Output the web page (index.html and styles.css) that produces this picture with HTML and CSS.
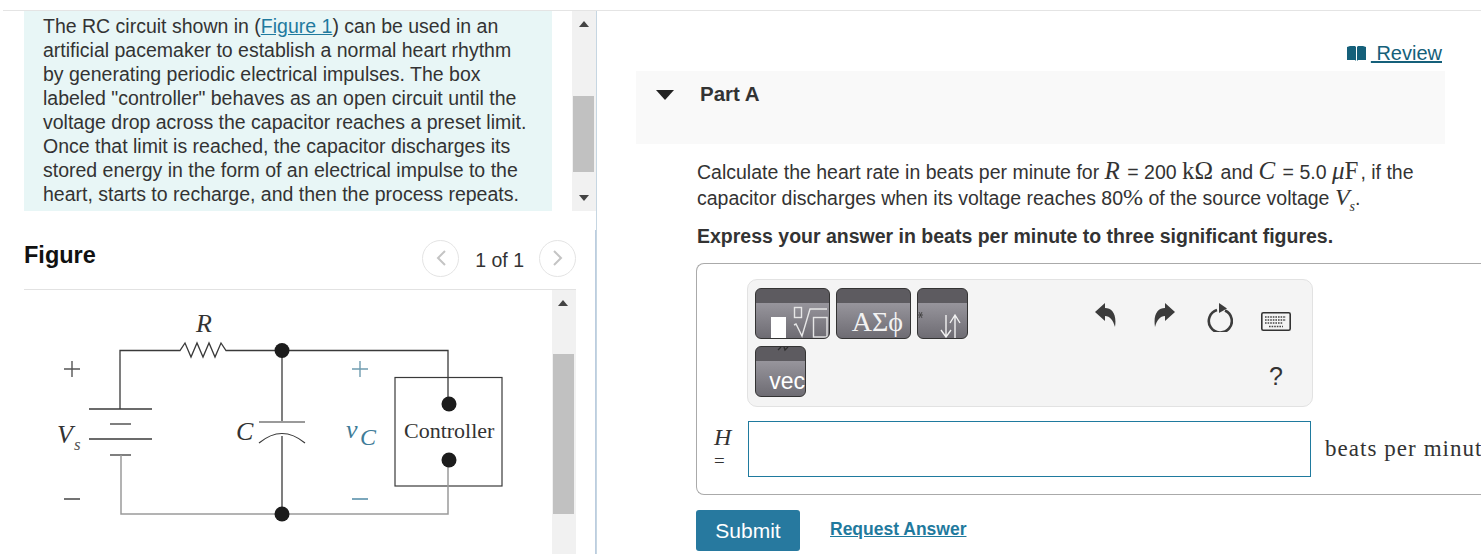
FILE: index.html
```html
<!DOCTYPE html>
<html lang="en">
<head>
  <meta charset="UTF-8">
  <title>Part A</title>
  <link rel="stylesheet" href="styles.css">
</head>
<body>
  <div class="page">
    <!-- Left column -->
    <div class="left">
      <div class="passage-row">
        <div class="passage">
          The RC circuit shown in (<a href="#">Figure 1</a>) can be used in an artificial pacemaker to establish a normal heart rhythm by generating periodic electrical impulses. The box labeled "controller" behaves as an open circuit until the voltage drop across the capacitor reaches a preset limit. Once that limit is reached, the capacitor discharges its stored energy in the form of an electrical impulse to the heart, starts to recharge, and then the process repeats.
        </div>
        <div class="scrollbar passage-scroll">
          <span class="arrow-up"></span>
          <span class="thumb"></span>
          <span class="arrow-down"></span>
        </div>
      </div>

      <div class="figure-head">
        <h2>Figure</h2>
        <div class="pager">
          <span class="pager-btn">
            <svg width="12" height="18" viewBox="0 0 12 18"><path d="M10 2 L3 9 L10 16" fill="none" stroke="#c4c4c4" stroke-width="2"/></svg>
          </span>
          <span class="pager-text">1 of 1</span>
          <span class="pager-btn">
            <svg width="12" height="18" viewBox="0 0 12 18"><path d="M2 2 L9 9 L2 16" fill="none" stroke="#c4c4c4" stroke-width="2"/></svg>
          </span>
        </div>
      </div>

      <div class="figure-body">
        <div class="diagram">
          <svg width="528" height="264" viewBox="0 0 528 264">
            <g fill="none" stroke="#3a3a3a" stroke-width="1.3">
              <path d="M96 119 V60.5 H156 L161 53 L167 67 L173 53 L179 67 L185 53 L191 67 L197 53 L202 60.5 H424 V114"/>
              <path d="M258 60.5 V132"/>
              <path d="M258 146 V224"/>
              <path d="M65 119 H128"/>
              <path d="M86 134 H107"/>
              <path d="M65 149 H128"/>
              <path d="M86 165 H107"/>
              <rect x="371" y="87.5" width="107" height="108.500" stroke-width="1.2"/>
              <path d="M235 153 Q258 134 281 153" stroke-width="1.2"/>
            </g>
            <g fill="none" stroke="#9a9a9a" stroke-width="1.5">
              <path d="M97 165 V224 H424 V170"/>
              <path d="M235 132 H281" stroke-width="2.2"/>
            </g>
            <path d="M40 79 H56 M48 71 V87" stroke="#555" stroke-width="1.4" fill="none"/>
            <path d="M40 209 H56" stroke="#444" stroke-width="1.5" fill="none"/>
            <path d="M328 79 H344 M336 71 V87" stroke="#6f9cb0" stroke-width="1.4" fill="none"/>
            <path d="M328 209 H344" stroke="#4f8aa6" stroke-width="1.5" fill="none"/>
            <g fill="#1c1c1c">
              <circle cx="258" cy="60.5" r="7.500"/>
              <circle cx="258" cy="224" r="7.500"/>
              <circle cx="425" cy="114" r="7.500"/>
              <circle cx="425" cy="170" r="7.500"/>
            </g>
            <text class="d-label" x="172" y="42">R</text>
            <text class="d-label" x="33" y="153">V</text>
            <text class="d-sub" x="50" y="160">s</text>
            <text class="d-label" x="212" y="150">C</text>
            <text class="d-label d-blue" x="322" y="148">v</text>
            <text class="d-sub d-blue-big" x="336" y="155">C</text>
            <text class="d-ctrl" x="380" y="148">Controller</text>
          </svg>
        </div>
        <div class="scrollbar figure-scroll">
          <span class="arrow-up"></span>
          <span class="thumb"></span>
        </div>
      </div>
    </div>

    <!-- Right column -->
    <div class="right">
      <div class="review-row">
        <a class="review" href="#">
          <svg width="19" height="15" viewBox="0 0 19 15"><path d="M0 1 L3 0 H8 L9 1 V15 L8 14 H0 Z M19 1 L16 0 H11 L10 1 V15 L11 14 H19 Z" fill="#15607a"/></svg>
          <span class="review-text">&nbsp;Review</span>
        </a>
      </div>

      <div class="part-head">
        <span class="part-arrow"></span>
        <h3>Part A</h3>
      </div>

      <div class="question">
        <p>Calculate the heart rate in beats per minute for <span class="math math-wide"><i>R</i></span> = 200 <span class="math math-wide">kΩ</span> and <span class="math math-wide"><i>C</i></span> = 5.0 <span class="math math-wide"><i>μ</i>F</span>, if the<br>capacitor discharges when its voltage reaches 80<span class="math">%</span> of the source voltage <span class="math"><i>V<sub>s</sub></i></span>.</p>
        <p class="instruction">Express your answer in beats per minute to three significant figures.</p>
      </div>

      <div class="answer-box">
        <div class="toolbar">
          <div class="tool-grid">
            <div class="tool-row">
              <span class="tool tool-wide">
                <svg width="75" height="51" viewBox="0 0 75 51">
                  <rect x="16" y="29" width="15" height="22" fill="#fff"/>
                  <g fill="none" stroke="#e6e6e6" stroke-width="1.400">
                    <rect x="39.500" y="19.500" width="7" height="10"/>
                    <path d="M39 37 L41 36 L47 48 L55 21 H72"/>
                    <rect x="58.500" y="29.500" width="13.500" height="19.500"/>
                  </g>
                </svg>
              </span>
              <span class="tool tool-wide"><span class="greek">ΑΣϕ</span></span>
              <span class="tool tool-narrow">
                <svg width="51" height="51" viewBox="0 0 51 51">
                  <path d="M2 24 L5 30 M5 24 L2 30 M1 27 H6" stroke="#3a3a3a" stroke-width="0.800" fill="none"/>
                  <g fill="none" stroke="#f2f2f2" stroke-width="1.400">
                    <path d="M29 27 V49 M24 42 L29 49 L34 42"/>
                    <path d="M38 50 V28 M33 35 L38 27 L43 35"/>
                  </g>
                </svg>
              </span>
            </div>
            <div class="tool-row">
              <span class="tool tool-narrow">
                <svg width="51" height="51" viewBox="0 0 51 51">
                  <path d="M23 4 L26 1 M29 1 L30 4 L33 1" stroke="#2e2e2e" stroke-width="1.300" fill="none"/>
                </svg>
                <span class="vec">vec</span>
              </span>
            </div>
          </div>
          <div class="tool-side">
            <div class="tool-icons">
              <svg class="icon-back" width="21" height="24" viewBox="0 0 21 24"><path d="M0 9 L10 0 V5 C17 5 22 11 20 24 C18 17 15 13 10 13 V18 Z" fill="#3c3c3c"/></svg>
              <svg class="icon-forward" width="21" height="24" viewBox="0 0 21 24"><path d="M21 9 L11 0 V5 C4 5 -1 11 1 24 C3 17 6 13 11 13 V18 Z" fill="#3c3c3c"/></svg>
              <svg class="icon-reload" width="26" height="29" viewBox="0 0 26 29"><path d="M10 7 A11.500 11.500 0 1 0 18 7.500" fill="none" stroke="#3c3c3c" stroke-width="2.600"/><path d="M12 0 L20 5.500 L12 10 Z" fill="#3c3c3c"/></svg>
              <svg class="icon-keys" width="30" height="19" viewBox="0 0 30 19">
                <rect x="0.800" y="0.800" width="28.400" height="17.400" rx="1.500" fill="none" stroke="#333" stroke-width="1.600"/>
                <path d="M4 5 H25 M4 8 H25 M4 11 H22 M8 14.500 H22" stroke="#444" stroke-width="1.500" stroke-dasharray="1.600 1" fill="none"/>
              </svg>
            </div>
            <span class="help">?</span>
          </div>
        </div>

        <div class="input-row">
          <div class="var"><i>H</i><span>=</span></div>
          <div class="answer-input"></div>
          <div class="units">beats per minute</div>
        </div>
      </div>

      <div class="actions">
        <button class="submit">Submit</button>
        <a class="request" href="#">Request Answer</a>
      </div>
    </div>
  </div>
</body>
</html>
```

FILE: styles.css
```css
/* General */
html, body {
  margin: 0;
  height: 554px;
  overflow: hidden;
  background: #fff;
}

body {
  font-family: 'Liberation Sans', Arial, sans-serif;
  color: #333;
}

.page {
  display: flex;
  margin-left: 3px;
  margin-top: 10px;
  height: 544px;
  border-top: 1px solid #e4e4e4;
}

a {
  color: #1f7a9e;
}

/* Left column */
.left {
  position: relative;
  flex: none;
  width: 593px;
  height: 544px;
  border-right: 1px solid #c6d6e2;
}

/* the divider gets thicker next to the figure */
.left::after {
  content: '';
  position: absolute;
  top: 219px;
  bottom: 0;
  right: 0;
  width: 1px;
  background: #bccddf;
}

.passage-row {
  display: flex;
  margin-left: 21px;
}

.passage {
  width: 490px;
  height: 197px;
  padding: 3px 19px 0 19px;
  background: #e8f6f6;
  font-size: 19.5px;
  line-height: 24px;
}

.scrollbar {
  position: relative;
  flex: none;
  width: 24px;
  background: #f1f1f1;
}

.passage-scroll {
  height: 200px;
  margin-left: 20px;
}

.thumb {
  position: absolute;
  left: 1px;
  width: 21px;
  background: #c1c1c1;
}

.passage-scroll .thumb {
  top: 85px;
  height: 76px;
}

.arrow-up, .arrow-down {
  position: absolute;
  left: 7px;
  width: 0;
  height: 0;
  border-left: 5px solid transparent;
  border-right: 5px solid transparent;
}

.arrow-up {
  top: 10px;
  border-bottom: 6px solid #444;
}

.arrow-down {
  bottom: 10px;
  border-top: 6px solid #444;
}

/* Figure */
.figure-head {
  display: flex;
  align-items: center;
  justify-content: space-between;
  width: 552px;
  height: 78px;
  margin-left: 21px;
  border-bottom: 1px solid #e2e2e2;
}

.figure-head h2 {
  margin: 10px 0 0;
  font-size: 23.500px;
  color: #111;
}

.pager {
  display: flex;
  align-items: center;
  margin-top: 16px;
}

.pager-btn {
  display: flex;
  align-items: center;
  justify-content: center;
  width: 37px;
  height: 37px;
  border: 1px solid #e4e4e4;
  border-radius: 50%;
  box-sizing: border-box;
}

.pager-text {
  margin: 4px 15px 0 16px;
  font-size: 19.5px;
}

.figure-body {
  display: flex;
  margin-left: 21px;
  width: 552px;
}

.diagram {
  width: 528px;
  height: 264px;
}

.figure-scroll {
  height: 264px;
}

.figure-scroll .thumb {
  top: 64px;
  height: 160px;
}

.figure-scroll .arrow-up {
  left: 6px;
}

.d-label {
  font-family: 'Liberation Serif', serif;
  font-style: italic;
  font-size: 26px;
  fill: #333;
}

.d-sub {
  font-family: 'Liberation Serif', serif;
  font-style: italic;
  font-size: 17px;
  fill: #555;
}

.d-blue {
  fill: #3f7c98;
}

.d-blue-big {
  font-size: 24px;
  fill: #3f7c98;
}

.d-ctrl {
  font-family: 'Liberation Serif', serif;
  font-size: 22px;
  fill: #333;
}

/* Right column */
.right {
  flex: none;
  width: 845px;
  padding-left: 39px;
  overflow: hidden;
}

.review-row {
  display: flex;
  justify-content: flex-end;
  align-items: flex-end;
  width: 806px;
  height: 60px;
}

.review {
  display: flex;
  align-items: center;
  margin-bottom: 6px;
  font-size: 20px;
  line-height: 24px;
  color: #15607a;
}

.review-text {
  margin-left: 5px;
}

.part-head {
  display: flex;
  width: 809px;
  height: 73px;
  background: #f9f9f9;
}

.part-arrow {
  width: 0;
  height: 0;
  margin: 19px 0 0 20px;
  border-left: 9px solid transparent;
  border-right: 9px solid transparent;
  border-top: 10px solid #222;
}

.part-head h3 {
  margin: 11px 0 0 26px;
  font-size: 20.500px;
  line-height: 24px;
  color: #333;
}

.question {
  width: 760px;
  margin-left: 61px;
  padding-top: 15px;
  font-size: 19.5px;
  line-height: 26px;
}

.question p {
  margin: 0;
}

.question .instruction {
  margin-top: 12px;
  font-weight: bold;
}

.math {
  font-family: 'Liberation Serif', serif;
  font-size: 24px;
  line-height: 20px;
}

.math-wide {
  font-size: 25px;
  padding-right: 2px;
}

.math sub {
  font-size: 14px;
  line-height: 0;
}

/* Answer box */
.answer-box {
  box-sizing: border-box;
  width: 806px;
  height: 232px;
  margin: 14px 0 0 60px;
  padding: 15px 0 0 50px;
  border: 1px solid #aaa;
  border-right: none;
  border-radius: 8px 0 0 8px;
}

.toolbar {
  display: flex;
  justify-content: space-between;
  box-sizing: border-box;
  width: 566px;
  height: 128px;
  padding: 8px 21px 0 7px;
  background: #f4f4f4;
  border: 1px solid #e2e2e2;
  border-radius: 10px;
}

.tool-grid {
  display: flex;
  flex-direction: column;
  gap: 7px;
}

.tool-row {
  display: flex;
  gap: 6px;
}

.tool {
  position: relative;
  display: block;
  box-sizing: border-box;
  height: 51px;
  overflow: hidden;
  border: 1px solid #333;
  border-radius: 6px;
  background: linear-gradient(#5d5b60 0, #5d5b60 14px, #97959c 14px, #6e6c73 100%);
}

.tool-wide {
  width: 75px;
}

.tool-narrow {
  width: 51px;
}

.tool svg {
  position: absolute;
  left: -1px;
  top: -1px;
}

.greek {
  position: absolute;
  right: 7px;
  bottom: 0;
  font-family: 'Liberation Serif', serif;
  font-size: 28px;
  line-height: 32px;
  color: #f2f2f2;
}

.vec {
  position: absolute;
  right: 0;
  bottom: 2px;
  font-size: 23px;
  line-height: 26px;
  color: #fff;
}

.tool-side {
  display: flex;
  flex-direction: column;
  align-items: flex-end;
}

.tool-icons {
  display: flex;
  align-items: flex-start;
  margin-top: 15px;
}

.icon-forward {
  margin-left: 38px;
}

.icon-reload {
  margin-left: 32px;
}

.icon-keys {
  margin: 9px 0 0 28px;
}

.help {
  margin: 29px 8px 0 0;
  font-size: 25px;
  line-height: 30px;
  color: #333;
}

.input-row {
  display: flex;
  align-items: center;
  margin: 14px 0 0 -33px;
}

.var {
  display: flex;
  flex-direction: column;
  width: 34px;
  margin-bottom: 6px;
  font-family: 'Liberation Serif', serif;
  font-size: 24px;
  line-height: 30px;
}

.var span {
  font-size: 19px;
  line-height: 18px;
}

.answer-input {
  flex: none;
  box-sizing: border-box;
  width: 563px;
  height: 56px;
  background: #fff;
  border: 1px solid #1f7a9e;
}

.units {
  flex: none;
  margin-left: 14px;
  font-family: 'Liberation Serif', serif;
  font-size: 23px;
  letter-spacing: 1.05px;
  white-space: nowrap;
  color: #333;
}

/* Actions */
.actions {
  display: flex;
  align-items: center;
  margin: 15px 0 0 60px;
}

.submit {
  width: 104px;
  height: 41px;
  padding: 0;
  border: none;
  border-radius: 3px;
  background: #27799f;
  color: #fff;
  font-family: 'Liberation Sans', Arial, sans-serif;
  font-size: 21px;
}

.request {
  margin: -2px 0 0 30px;
  font-size: 17.5px;
  font-weight: bold;
}
```
